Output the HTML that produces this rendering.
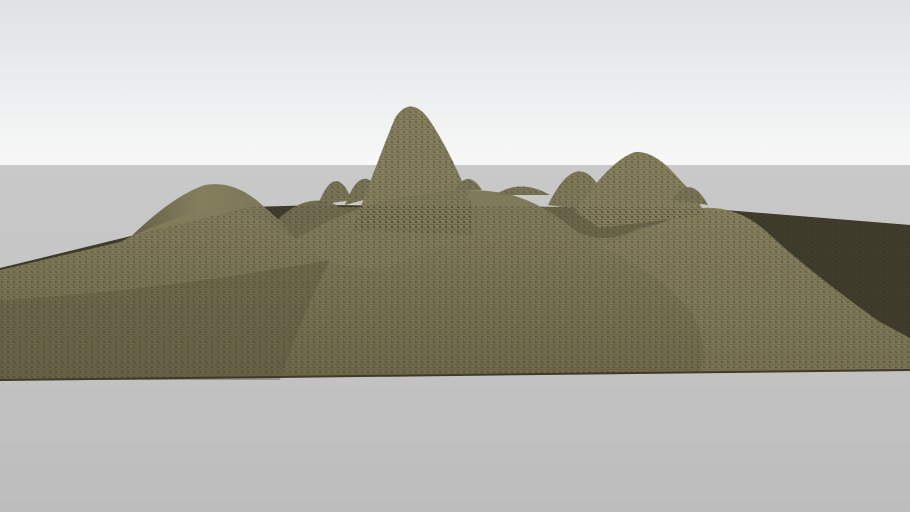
<!DOCTYPE html><html><head><style>html,body{margin:0;padding:0;width:910px;height:512px;overflow:hidden;background:#c4c4c4}</style></head><body>
<svg width="910" height="512" viewBox="0 0 910 512" xmlns="http://www.w3.org/2000/svg">
<defs>
<linearGradient id="sky" x1="0" y1="0" x2="0" y2="1"><stop offset="0" stop-color="#dfe2e4"/><stop offset="1" stop-color="#f8f8f8"/></linearGradient>
<linearGradient id="gnd" x1="0" y1="0" x2="0" y2="1"><stop offset="0" stop-color="#c9c9c9"/><stop offset="1" stop-color="#bdbdbd"/></linearGradient>
<pattern id="dots" width="6" height="5" patternUnits="userSpaceOnUse"><circle cx="2" cy="2" r="1" fill="#2e2b1e" opacity="0.7"/><path d="M0 4.5 L6 4.5 M0 0 L6 5" stroke="#3a3726" stroke-width="0.5" opacity="0.5"/></pattern>
<linearGradient id="t1" x1="0" y1="0" x2="0" y2="1"><stop offset="0" stop-color="#837d5c"/><stop offset="1" stop-color="#6e694b"/></linearGradient>
<linearGradient id="t2" x1="0" y1="0" x2="1" y2="0"><stop offset="0" stop-color="#56523c"/><stop offset="0.5" stop-color="#847e5d"/><stop offset="1" stop-color="#787356"/></linearGradient>
<clipPath id="tc"><path d="M0 268 L250 207 L320 205 L700 208 L910 225 L910 370 L0 380Z"/></clipPath>
</defs>
<rect width="910" height="165" fill="url(#sky)"/>
<rect y="165" width="910" height="347" fill="url(#gnd)"/>
<path d="M0 268 L250 207 L320 205 L700 208 L910 225 L910 370 L0 380Z" fill="#3f3c2c"/>
<path d="M320 207 L700 207 L700 250 L320 250Z" fill="#6c674b"/>
<path d="M318 205 Q335 160 352 200Z M345 205 Q362 158 382 195Z" fill="#7a7556"/>
<path d="M352 230 Q378 160 395 118 Q410 95 428 118 Q450 150 472 205 L472 235 Z" fill="#857f5e"/>
<path d="M455 190 Q468 168 482 190Z M495 195 Q520 178 550 195Z" fill="#7b7657"/>
<path d="M548 205 Q575 150 598 185 L602 212 Z" fill="#7f7a5a"/>
<path d="M575 212 Q610 160 635 152 Q655 150 680 180 Q700 200 705 215 L600 228Z" fill="#857f5e"/>
<path d="M672 200 Q690 172 708 205Z" fill="#7a7556"/>
<path d="M268 230 Q300 192 332 203 Q352 212 362 228 L362 245 L268 245Z" fill="#726d50"/>
<path d="M95 275 Q160 200 205 185 Q235 180 262 205 Q292 230 305 252 L95 285Z" fill="url(#t2)"/>
<path d="M295 240 Q360 200 420 195 Q470 185 512 195 Q545 205 572 228 Q600 248 640 228 L700 215 L720 262 L295 272Z" fill="#7f7a5a"/>
<path d="M0 270 Q60 256 120 242 Q180 212 220 210 Q270 215 320 257 Q350 272 390 267 Q430 247 480 234 Q540 227 600 247 Q650 227 700 208 Q740 205 770 235 Q820 280 880 322 L910 338 L910 370 L0 380Z" fill="url(#t1)"/>
<path d="M0 300 Q150 292 330 260 Q300 320 280 380 L0 380Z" fill="#5f5a40" opacity="0.45"/>
<path d="M600 247 Q650 227 700 208 Q740 205 770 235 Q820 280 880 322 L910 338 L910 370 L700 372 Q720 300 600 247Z" fill="#8c8663" opacity="0.35"/>
<rect width="910" height="400" fill="url(#dots)" opacity="0.6" clip-path="url(#tc)"/>
<path d="M352 230 Q378 160 395 118 Q410 95 428 118 Q450 150 472 205 L472 235 Z M575 212 Q610 160 635 152 Q655 150 680 180 Q700 200 705 215 L600 228Z M548 205 Q575 150 598 185 L602 212 Z M318 205 Q335 160 352 200Z M345 205 Q362 158 382 195Z M455 190 Q468 168 482 190Z M495 195 Q520 178 550 195Z M672 200 Q690 172 708 205Z" fill="url(#dots)" opacity="0.6"/>
<path d="M0 380 L910 370" stroke="#3e3b2b" stroke-width="2"/>
</svg>
</body></html>
